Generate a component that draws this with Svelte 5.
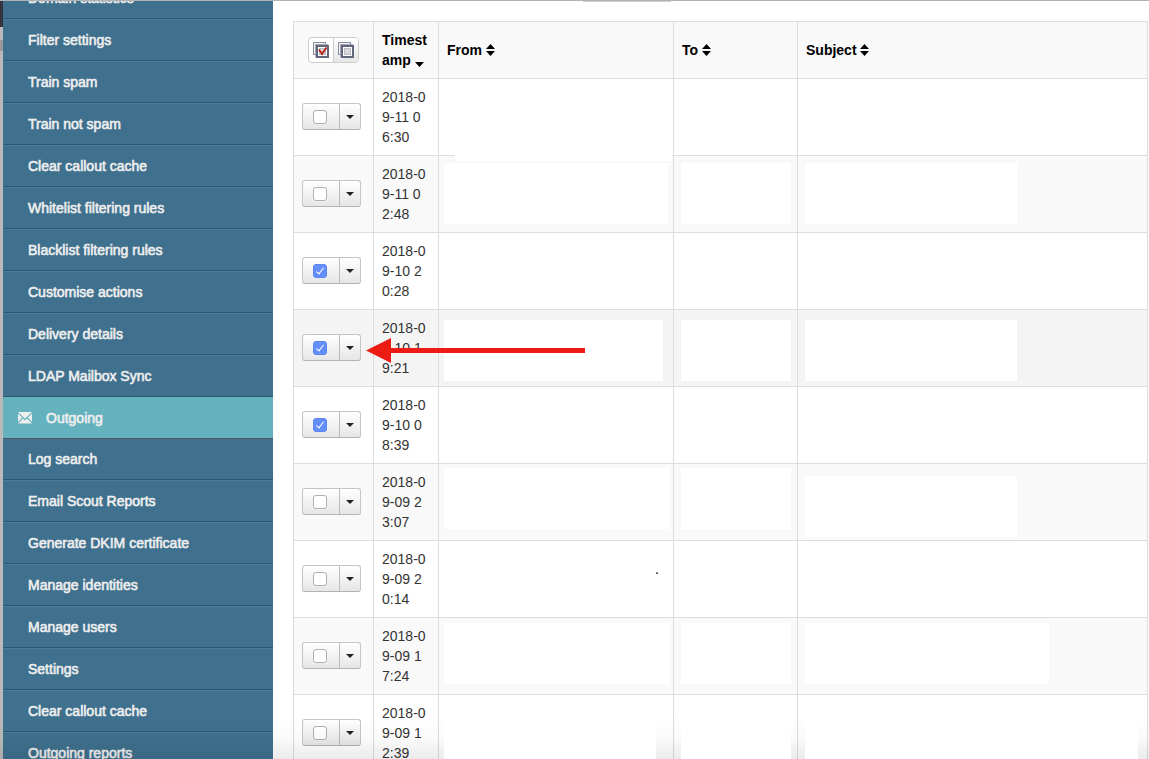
<script>
  const menu = [
    { label: 'Domain statistics' },
    { label: 'Filter settings' },
    { label: 'Train spam' },
    { label: 'Train not spam' },
    { label: 'Clear callout cache' },
    { label: 'Whitelist filtering rules' },
    { label: 'Blacklist filtering rules' },
    { label: 'Customise actions' },
    { label: 'Delivery details' },
    { label: 'LDAP Mailbox Sync' },
    { label: 'Outgoing', heading: true },
    { label: 'Log search' },
    { label: 'Email Scout Reports' },
    { label: 'Generate DKIM certificate' },
    { label: 'Manage identities' },
    { label: 'Manage users' },
    { label: 'Settings' },
    { label: 'Clear callout cache' },
    { label: 'Outgoing reports' },
  ];

  // masks: [top, width] of the blanked area in the from, to and subject cells
  let rows = $state([
    { time: '2018-09-11 06:30', checked: false, masks: [] },
    { time: '2018-09-11 02:48', checked: false, masks: [[7, 224], [7, 110], [7, 212]] },
    { time: '2018-09-10 20:28', checked: true, masks: [] },
    { time: '2018-09-10 19:21', checked: true, active: true, masks: [[10, 219], [10, 110], [10, 212]] },
    { time: '2018-09-10 08:39', checked: true, masks: [] },
    { time: '2018-09-09 23:07', checked: false, masks: [[4, 226], [4, 110], [12, 212]] },
    { time: '2018-09-09 20:14', checked: false, masks: [], mark: true },
    { time: '2018-09-09 17:24', checked: false, masks: [[5, 226], [5, 110], [5, 244]] },
    { time: '2018-09-09 12:39', checked: false, masks: [[12, 212], [12, 110], [12, 333]] },
  ]);

  function setAll(value) {
    rows.forEach((row) => (row.checked = value));
  }
</script>

{#snippet sortIcon()}
  <svg class="sort" width="9" height="12" viewBox="0 0 9 12" aria-hidden="true">
    <path d="M4.5 0 9 5H0zM0 7h9l-4.500 5z" />
  </svg>
{/snippet}

{#snippet stack(ticked)}
  <svg width="18" height="18" viewBox="0 0 18 18" aria-hidden="true">
    <rect x="1.500" y="1.500" width="12" height="12" fill="#f4f4f7" stroke="#8c8c9e" />
    <rect x="3.500" y="3.500" width="12" height="12" fill="#e2e2e8" stroke="#a6a6b6" />
    <rect x="5" y="5" width="11" height="11" fill="#fff" stroke="#62667a" stroke-width="2" />
    <rect x="7.500" y="7.500" width="6" height="6" fill="#d8d8dc" stroke="#bcbcc4" />
    {#if ticked}
      <path d="M7 8.500 10 13 14.500 6.500" fill="none" stroke="#b8281c" stroke-width="2" />
    {/if}
  </svg>
{/snippet}

<div class="page">
  <div class="edge"></div>

  <nav class="sidebar">
    <ul>
      {#each menu as item}
        <li class:heading={item.heading}>
          <a href="#menu">
            {#if item.heading}
              <svg width="14" height="12" viewBox="0 0 14 12" aria-hidden="true">
                <path d="M0 0h14L7 6.800zM0 1.500 4.200 5.600 0 10zM14 1.500 9.800 5.600 14 10zM0 11.500 5 6.400l2 2 2-2 5 5.100z" />
              </svg>
            {/if}
            {item.label}
          </a>
        </li>
      {/each}
    </ul>
  </nav>

  <main>
    <div class="handle"></div>
    <table>
      <colgroup>
        <col class="col-select" />
        <col class="col-time" />
        <col class="col-from" />
        <col class="col-to" />
        <col />
      </colgroup>
      <thead>
        <tr>
          <th class="tools">
            <div class="toggle">
              <button aria-label="Select all" onclick={() => setAll(true)}>{@render stack(true)}</button>
              <button aria-label="Select none" onclick={() => setAll(false)}>{@render stack(false)}</button>
            </div>
          </th>
          <th class="time">Timestamp <svg class="down" width="9" height="5" viewBox="0 0 9 5" aria-hidden="true"><path d="M0 0h9L4.500 5z" /></svg></th>
          <th>From {@render sortIcon()}</th>
          <th>To {@render sortIcon()}</th>
          <th>Subject {@render sortIcon()}</th>
        </tr>
      </thead>
      <tbody>
        {#each rows as row, r}
          <tr class:active={row.active}>
            <td>
              <div class="split">
                <label><input type="checkbox" aria-label="Select message" bind:checked={row.checked} /></label>
                <button aria-label="Actions">
                  <svg width="8" height="4" viewBox="0 0 8 4" aria-hidden="true"><path d="M0 0h8L4 4z" /></svg>
                </button>
              </div>
            </td>
            <td class="time">{row.time}</td>
            {#each [0, 1, 2] as c}
              <td>
                {#if row.masks[c]}
                  <div
                    class="mask"
                    class:inset={c > 0}
                    style="top: {row.masks[c][0]}px; width: {row.masks[c][1]}px"
                  ></div>
                {:else if r === 0 && c === 0}
                  <div class="mask tall"></div>
                {:else if row.mark && c === 0}
                  <div class="mark">.</div>
                {/if}
              </td>
            {/each}
          </tr>
        {/each}
      </tbody>
    </table>
    <svg class="arrow" width="219" height="25" viewBox="0 0 219 25" aria-hidden="true">
      <path d="M0 12.500 25 0v10h194v5H25v10z" />
    </svg>
  </main>
  <div class="fade"></div>
</div>

<style>
  :global(body) {
    margin: 0;
    background: #fff;
  }

  .page {
    position: relative;
    display: flex;
    box-sizing: border-box;
    height: 100vh;
    overflow: hidden;
    border-top: 1px solid #b2b2b2;
    font-family: 'Liberation Sans', Arial, sans-serif;
    font-size: 14px;
    line-height: 20px;
    color: #333;
  }

  .edge {
    flex: none;
    width: 3px;
    background: linear-gradient(#33343d 26px, #b9b9b9 26px, #b9b9b9 39px, #999 39px, #999 50px, #b9b9b9 50px);
  }

  .sidebar {
    flex: none;
    width: 270px;
    background: #3f708d;
    overflow: hidden;
  }

  ul {
    list-style: none;
    margin: -24px 0 0;
    padding: 0;
  }

  li {
    box-sizing: border-box;
    height: 42px;
    border-top: 1px solid #4b7c99;
    border-bottom: 1px solid #2d566f;
  }

  li a {
    display: flex;
    align-items: center;
    height: 40px;
    padding-left: 25px;
    color: #eee;
    text-decoration: none;
    -webkit-text-stroke: 0.6px #eee;
  }

  .heading {
    background: #64b2be;
    border-top-color: #64b2be;
    border-bottom-color: #4f5860;
  }

  .heading a {
    gap: 14px;
    padding-left: 15px;
  }

  .heading svg {
    fill: #eee;
  }

  .heading + li {
    height: 41px;
    border-top: 0;
  }

  main {
    position: relative;
    flex: 1;
    min-width: 0;
    padding: 20px 1px 0 20px;
  }

  .handle {
    position: absolute;
    top: 0;
    left: 310px;
    width: 88px;
    height: 1px;
    background: #ccc;
  }

  table {
    width: 100%;
    table-layout: fixed;
    border-collapse: collapse;
  }

  .col-select {
    width: 80px;
  }

  .col-time {
    width: 65px;
  }

  .col-from {
    width: 235px;
  }

  .col-to {
    width: 124px;
  }

  th,
  td {
    position: relative;
    padding: 8px;
    border: 1px solid #ddd;
    text-align: left;
  }

  th {
    background: #f9f9f9;
    color: #000;
  }

  tbody tr:nth-child(even) {
    background: #f9f9f9;
  }

  tbody tr.active {
    background: #f4f4f4;
  }

  .time {
    padding-right: 10px;
    word-break: break-all;
  }

  .tools {
    padding: 0;
  }

  .sort {
    vertical-align: -1px;
  }

  .down {
    vertical-align: -2px;
  }

  button {
    display: flex;
    align-items: center;
    justify-content: center;
    padding: 0;
    border: 0;
    background: none;
  }

  .toggle {
    display: flex;
    box-sizing: border-box;
    width: 51px;
    height: 26px;
    margin: 0 auto;
    border: 1px solid #ccc;
    border-radius: 4px;
    background: #fff;
    overflow: hidden;
  }

  .toggle button {
    flex: 1;
  }

  .toggle button + button {
    border-left: 1px solid #ccc;
    background: linear-gradient(#fff, #e6e6e6);
  }

  .split {
    display: flex;
    box-sizing: border-box;
    width: 59px;
    height: 27px;
    margin-bottom: 1px;
    border: 1px solid #c5c5c5;
    border-bottom-color: #b3b3b3;
    border-radius: 3px;
    background: linear-gradient(#fff, #e6e6e6);
  }

  .split label {
    display: flex;
    flex: 1;
    align-items: center;
    padding: 1px 0 0 10px;
  }

  .split button {
    width: 21px;
    padding-top: 1px;
    border-left: 1px solid #bbb;
    fill: #222;
  }

  input {
    appearance: none;
    display: grid;
    place-items: center;
    box-sizing: border-box;
    width: 14px;
    height: 14px;
    margin: 0;
    border: 1px solid #b0b0b0;
    border-radius: 3px;
    background: #fff;
  }

  input:checked {
    border-color: #5b87f5;
    background: #648ffb;
  }

  input:checked::after {
    content: '';
    width: 3px;
    height: 7px;
    margin-bottom: 2px;
    border: solid #fff;
    border-width: 0 1px 1px 0;
    transform: rotate(38deg);
  }

  .mask {
    position: absolute;
    z-index: 2;
    left: 5px;
    height: 61px;
    background: #fff;
  }

  .mask.inset {
    left: 7px;
  }

  .mask.tall {
    top: 16px;
    left: 16px;
    right: 1px;
    height: 66px;
  }

  .mark {
    position: absolute;
    top: 18px;
    right: 14px;
    color: #000;
  }

  .arrow {
    position: absolute;
    top: 337px;
    left: 93px;
    z-index: 3;
    fill: #ec1c15;
  }

  .fade {
    position: absolute;
    right: 0;
    bottom: 0;
    left: 0;
    height: 42px;
    background: linear-gradient(transparent, rgba(0, 0, 0, 0.02) 50%, rgba(0, 0, 0, 0.08));
    pointer-events: none;
  }
</style>
